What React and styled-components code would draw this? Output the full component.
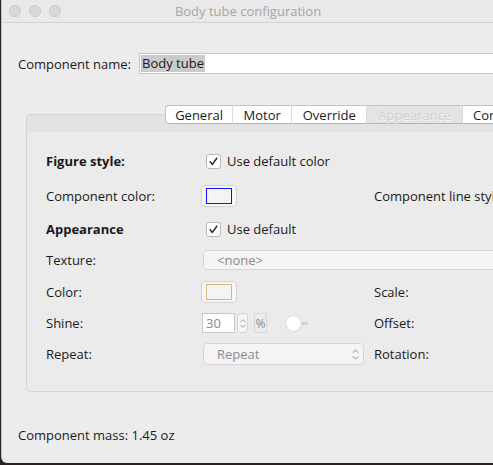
import React from "react";
import styled, { createGlobalStyle } from "styled-components";

const Global = createGlobalStyle`
  html, body { margin: 0; padding: 0; }
  body {
    background: #2b2222;
    font-family: "Open Sans", "Noto Sans", sans-serif;
    font-size: 13px;
    color: #1a1a1a;
    overflow: hidden;
  }
`;

const Window = styled.div`
  margin-left: 1px;
  width: 520px;
  height: 463px;
  background: #ececec;
  border-left: 1px solid #c4c4c4;
  border-bottom-left-radius: 6px;
  overflow: hidden;
  display: flex;
  flex-direction: column;
`;

const TitleBar = styled.div`
  height: 22px;
  flex: none;
  border-bottom: 1px solid #d2d2d2;
  background: #e9e9e9;
  display: flex;
  align-items: center;
  position: relative;
  width: 492px;
`;

const Lights = styled.div`
  display: flex;
  gap: 8px;
  padding-left: 7px;
`;

const Light = styled.span`
  width: 12px;
  height: 12px;
  border-radius: 50%;
  background: #d8d8d8;
  border: 0.5px solid #c9c9c9;
  box-sizing: border-box;
`;

const Title = styled.div`
  position: absolute;
  left: 0;
  right: 0;
  text-align: center;
  color: #a6a6a6;
  font-size: 13px;
`;

const NameRow = styled.div`
  display: flex;
  align-items: center;
  margin-top: 30px;
  padding-left: 16px;
  gap: 8px;
`;

const Label = styled.span`
  font-weight: ${(p) => (p.$bold ? 700 : 400)};
  white-space: nowrap;
`;

const NameField = styled.div`
  flex: 1;
  height: 21px;
  background: #fff;
  border: 1px solid #c6c6c6;
  box-sizing: border-box;
  display: flex;
  align-items: center;
  padding-left: 1px;
`;

const Selected = styled.span`
  background: #cbcbcb;
  padding: 0 1px;
  line-height: 17px;
`;

const TabArea = styled.div`
  margin: 31px 0 0 24px;
  display: flex;
  flex-direction: column;
`;

const TabRow = styled.div`
  display: flex;
  padding-left: 139px;
  margin-bottom: -10px;
  position: relative;
  z-index: 1;
`;

const Tab = styled.div`
  height: 19px;
  box-sizing: border-box;
  width: ${(p) => p.$w}px;
  display: flex;
  align-items: center;
  background: ${(p) => (p.$active ? "#e4e4e4" : "#ffffff")};
  color: ${(p) => (p.$active ? "#cfcfcf" : "#1a1a1a")};
  text-shadow: ${(p) => (p.$active ? "0 1px 0 #f8f8f8" : "none")};
  border-top: 1px solid #c3c3c3;
  border-bottom: 1px solid #b4b4b4;
  border-left: 1px solid ${(p) => (p.$first ? "#c3c3c3" : "#dadada")};
  border-top-left-radius: ${(p) => (p.$first ? "4px" : "0")};
  border-bottom-left-radius: ${(p) => (p.$first ? "4px" : "0")};
  justify-content: ${(p) => (p.$left ? "flex-start" : "center")};
  padding-left: ${(p) => (p.$left ? "10px" : "0")};
`;

const Panel = styled.div`
  border: 1px solid #d4d4d4;
  border-right: none;
  border-radius: 5px 0 0 5px;
  height: 276px;
  background: #ebebeb;
  display: flex;
  flex-direction: column;
`;

const PanelStrip = styled.div`
  height: 17px;
  background: #e3e3e3;
  border-top-left-radius: 5px;
  flex: none;
`;

const Form = styled.div`
  display: grid;
  grid-template-columns: 155px 173px auto;
  grid-template-rows: 35px 33px 31px 32px 31px 31px 31px;
  align-items: start;
  padding: 18px 0 0 19px;
`;

const Cell = styled.div`
  height: 22px;
  display: flex;
  align-items: center;
  gap: ${(p) => p.$gap || 0}px;
  padding-left: ${(p) => p.$pl || 0}px;
  grid-column: ${(p) => p.$span || "auto"};
`;

const Check = styled.span`
  width: 15px;
  height: 15px;
  box-sizing: border-box;
  background: #fff;
  border: 1px solid #b9b9b9;
  border-radius: 3px;
  display: flex;
  align-items: center;
  justify-content: center;
  margin-right: 6px;
`;

const ColorButton = styled.div`
  width: 36px;
  height: 22px;
  box-sizing: border-box;
  background: #f6f6f6;
  border: 1px solid #d3d3d3;
  border-radius: 4px;
  display: flex;
  align-items: center;
  justify-content: center;
`;

const Swatch = styled.div`
  width: 26px;
  height: 16px;
  box-sizing: border-box;
  border: 1px solid ${(p) => p.$c};
  background: #f4f4f4;
`;

const Combo = styled.div`
  height: ${(p) => p.$h}px;
  width: ${(p) => (p.$w ? `${p.$w}px` : "auto")};
  flex: ${(p) => (p.$w ? "none" : "1")};
  box-sizing: border-box;
  background: #f4f4f4;
  border: 1px solid #d6d6d6;
  border-radius: 4px;
  color: #8a8a8a;
  display: flex;
  align-items: center;
  justify-content: space-between;
  padding: 0 4px 0 13px;
`;

const SpinField = styled.div`
  width: 33px;
  height: 20px;
  box-sizing: border-box;
  background: #fff;
  border: 1px solid #c9c9c9;
  color: #8a8a8a;
  display: flex;
  align-items: center;
  padding-left: 3px;
`;

const Stepper = styled.div`
  width: 11px;
  height: 20px;
  box-sizing: border-box;
  border: 1px solid #d4d4d4;
  border-radius: 4px;
  background: #f6f6f6;
  display: flex;
  align-items: center;
  justify-content: center;
`;

const Percent = styled.div`
  width: 13px;
  height: 20px;
  box-sizing: border-box;
  border: 1px solid #d8d8d8;
  color: #8a8a8a;
  display: flex;
  align-items: center;
  justify-content: center;
  font-size: 12px;
  margin-left: 4px;
`;

const Slider = styled.div`
  display: flex;
  align-items: center;
  margin-left: 17px;
`;

const Knob = styled.div`
  width: 15px;
  height: 15px;
  border-radius: 50%;
  background: #fff;
  box-shadow: 0 0 0 0.5px #cfcfcf, 0 0.5px 1px rgba(0,0,0,0.15);
`;

const Track = styled.div`
  width: 7px;
  height: 3px;
  border-radius: 1.5px;
  background: #d2d2d2;
`;

const Mass = styled.div`
  margin-top: 34px;
  padding-left: 16px;
`;

const Checkmark = () => (
  <svg width="11" height="11" viewBox="0 0 11 11">
    <path d="M2.2 5.8 L4.4 8.4 L8.8 2.2" fill="none" stroke="#2a2a2a" strokeWidth="1.5" strokeLinecap="round" strokeLinejoin="round" />
  </svg>
);

const UpDown = ({ w = 7, h = 13, c = "#8c8c8c" }) => (
  <svg width={w} height={h} viewBox="0 0 7 13">
    <path d="M1 4.5 L3.5 2 L6 4.5 M1 8.5 L3.5 11 L6 8.5" fill="none" stroke={c} strokeWidth="1" strokeLinecap="round" strokeLinejoin="round" />
  </svg>
);

export default function App() {
  return (
    <>
      <Global />
      <Window>
        <TitleBar>
          <Lights>
            <Light />
            <Light />
            <Light />
          </Lights>
          <Title>Body tube configuration</Title>
        </TitleBar>
        <NameRow>
          <Label>Component name:</Label>
          <NameField>
            <Selected>Body tube</Selected>
          </NameField>
        </NameRow>
        <TabArea>
          <TabRow>
            <Tab $w={68} $first>General</Tab>
            <Tab $w={60}>Motor</Tab>
            <Tab $w={76}>Override</Tab>
            <Tab $w={97} $active>Appearance</Tab>
            <Tab $w={60} $left>Configuration</Tab>
          </TabRow>
          <Panel>
            <PanelStrip />
            <Form>
              <Cell><Label $bold>Figure style:</Label></Cell>
              <Cell $pl={5} $span="2 / 4">
                <Check><Checkmark /></Check>
                <Label>Use default color</Label>
              </Cell>

              <Cell><Label>Component color:</Label></Cell>
              <Cell>
                <ColorButton><Swatch $c="#0a12f0" /></ColorButton>
              </Cell>
              <Cell><Label>Component line style:</Label></Cell>

              <Cell><Label $bold>Appearance</Label></Cell>
              <Cell $pl={5} $span="2 / 4">
                <Check><Checkmark /></Check>
                <Label>Use default</Label>
              </Cell>

              <Cell><Label>Texture:</Label></Cell>
              <Cell $pl={2} $span="2 / 4">
                <Combo $h={20}>&lt;none&gt;</Combo>
              </Cell>

              <Cell><Label>Color:</Label></Cell>
              <Cell>
                <ColorButton><Swatch $c="#d9b784" /></ColorButton>
              </Cell>
              <Cell><Label>Scale:</Label></Cell>

              <Cell><Label>Shine:</Label></Cell>
              <Cell $pl={1} $gap={2}>
                <SpinField>30</SpinField>
                <Stepper><UpDown w={6} h={13} /></Stepper>
                <Percent>%</Percent>
                <Slider>
                  <Knob />
                  <Track />
                </Slider>
              </Cell>
              <Cell><Label>Offset:</Label></Cell>

              <Cell><Label>Repeat:</Label></Cell>
              <Cell $pl={2}>
                <Combo $h={22} $w={161}>
                  Repeat
                  <UpDown />
                </Combo>
              </Cell>
              <Cell><Label>Rotation:</Label></Cell>
            </Form>
          </Panel>
        </TabArea>
        <Mass>Component mass: 1.45 oz</Mass>
      </Window>
    </>
  );
}
